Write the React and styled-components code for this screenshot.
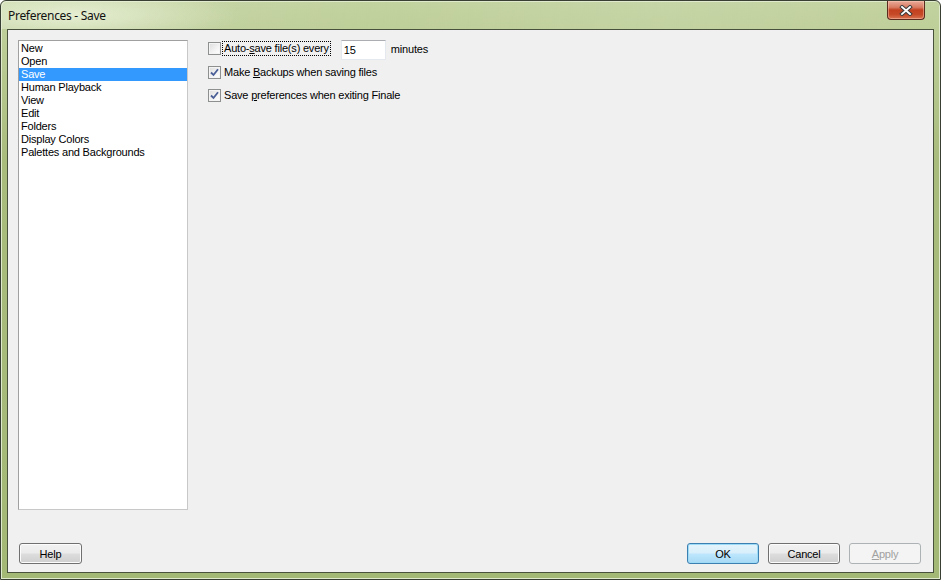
import React from 'react';
import styled, { createGlobalStyle } from 'styled-components';

const Global = createGlobalStyle`
  html, body { margin: 0; padding: 0; background: #ffffff; }
  body {
    font-family: "Liberation Sans", Arial, sans-serif;
    font-size: 11px;
    letter-spacing: -0.2px;
    color: #000;
  }
`;

const pages = [
  'New', 'Open', 'Save', 'Human Playback', 'View', 'Edit',
  'Folders', 'Display Colors', 'Palettes and Backgrounds',
];

const Window = styled.div`
  width: 941px;
  height: 580px;
  box-sizing: border-box;
  border: 1px solid #3a3f33;
  border-radius: 6px 6px 0 0;
  background: linear-gradient(180deg, #c3d3a0 0px, #a9bc7c 160px, #a4b876 100%);
  box-shadow: inset 1px 1px 0 #dfe9cb, inset -1px -1px 0 #dfe9cb;
  padding: 0 6px 6px 6px;
  display: flex;
  flex-direction: column;
`;

const TitleBar = styled.div`
  height: 28px;
  display: flex;
  align-items: flex-start;
  justify-content: space-between;
  margin: 0 -6px;
  padding: 0 7px 0 7px;
  background:
    radial-gradient(ellipse 170px 30px at 70px 14px, rgba(232, 240, 214, 0.9), rgba(232, 240, 214, 0) 100%),
    linear-gradient(100deg, rgba(255,255,255,0.12) 0%, rgba(255,255,255,0) 40%, rgba(255,255,255,0.08) 70%, rgba(255,255,255,0) 100%);
  border-radius: 6px 6px 0 0;
`;

const Title = styled.div`
  font-family: "Noto Sans", "Open Sans", sans-serif;
  font-size: 12px;
  letter-spacing: -0.3px;
  color: #111;
  padding-top: 6px;
`;

const CloseButton = styled.div`
  width: 38px;
  height: 19px;
  margin-right: 8px;
  box-sizing: border-box;
  border: 1px solid #5a2a1e;
  border-top: none;
  border-radius: 0 0 4px 4px;
  background: linear-gradient(180deg, #e9aa98 0%, #d97c63 35%, #c2401f 50%, #c64a28 75%, #da7352 100%);
  box-shadow: inset 0 0 0 1px rgba(255, 210, 190, 0.45);
  display: flex;
  align-items: center;
  justify-content: center;
`;

const Client = styled.div`
  flex: 1;
  box-sizing: border-box;
  border: 1px solid #47513b;
  background: #f0f0f0;
  display: flex;
  flex-direction: column;
  padding: 10px 12px 8px 10px;
`;

const Main = styled.div`
  display: flex;
  gap: 20px;
  flex: 1;
`;

const PageList = styled.ul`
  list-style: none;
  margin: 0;
  padding: 1px 0;
  width: 170px;
  height: 470px;
  box-sizing: border-box;
  background: #fff;
  border: 1px solid #c8c8c8;
  border-top-color: #a0a0a0;
  border-left-color: #a0a0a0;
`;

const PageItem = styled.li`
  height: 13px;
  line-height: 13px;
  padding-left: 2px;
  background: ${p => (p.$selected ? '#3399ff' : 'transparent')};
  color: ${p => (p.$selected ? '#fff' : '#000')};
  white-space: nowrap;
`;

const Options = styled.div`
  display: flex;
  flex-direction: column;
  padding-top: 2px;
`;

const Row = styled.div`
  display: flex;
  align-items: center;
  height: 13px;
  margin-bottom: ${p => p.$gap || 0}px;
`;

const Box = styled.span`
  width: 13px;
  height: 13px;
  flex: none;
  box-sizing: border-box;
  border: 1px solid #8e8f8f;
  background: linear-gradient(135deg, #dcdcdc 0%, #f4f4f4 60%, #ffffff 100%);
  box-shadow: inset 0 0 0 1px #f4f4f4;
  display: flex;
  align-items: center;
  justify-content: center;
  margin-right: 1px;
`;

const Label = styled.span`
  padding: 0 1px;
  line-height: 13px;
  border: 1px dotted ${p => (p.$focus ? '#000' : 'transparent')};
  white-space: nowrap;
`;

const Key = styled.span`
  text-decoration: underline;
`;

const NumberField = styled.div`
  width: 45px;
  height: 20px;
  flex: none;
  box-sizing: border-box;
  margin: 3px 0 0 10px;
  border: 1px solid #e3e9ef;
  border-top-color: #abadb3;
  background: #fff;
  padding: 2px 0 0 2px;
  line-height: 14px;
`;

const Unit = styled.span`
  margin-left: 5px;
`;

const Footer = styled.div`
  display: flex;
  align-items: center;
  gap: 9px;
  height: 21px;
`;

const Spacer = styled.div`
  flex: 1;
`;

const Button = styled.div`
  width: ${p => p.$w || 72}px;
  height: 21px;
  box-sizing: border-box;
  margin-left: ${p => p.$indent || 0}px;
  border-radius: 3px;
  display: flex;
  align-items: center;
  justify-content: center;
  border: 1px solid ${p => (p.$default ? '#3c7fb1' : p.$disabled ? '#adb2b5' : '#707070')};
  color: ${p => (p.$disabled ? '#a0a0a0' : '#000')};
  background: ${p =>
    p.$default
      ? 'linear-gradient(180deg, #e5f4fc 0%, #d8effb 48%, #bde6fd 52%, #a7d9f5 100%)'
      : p.$disabled
      ? '#f4f4f4'
      : 'linear-gradient(180deg, #f2f2f2 0%, #ebebeb 48%, #dddddd 52%, #cfcfcf 100%)'};
  box-shadow: inset 0 0 0 1px ${p => (p.$default ? '#9edbf7' : p.$disabled ? '#f4f4f4' : '#fcfcfc')};
`;

function Check({ checked }) {
  return (
    <Box>
      {checked && (
        <svg width="9" height="9" viewBox="0 0 9 9">
          <path d="M1 4.5 L3.5 7 L8 1.2" fill="none" stroke="#4a5f97" strokeWidth="1.8" />
        </svg>
      )}
    </Box>
  );
}

export default function App() {
  return (
    <>
      <Global />
      <Window>
        <TitleBar>
          <Title>Preferences - Save</Title>
          <CloseButton>
            <svg width="14" height="11" viewBox="0 0 14 11">
              <path d="M3 2 L11 9 M11 2 L3 9" stroke="#3b3b3b" strokeWidth="3.8" strokeLinecap="square" />
              <path d="M3 2 L11 9 M11 2 L3 9" stroke="#ffffff" strokeWidth="1.9" strokeLinecap="square" />
            </svg>
          </CloseButton>
        </TitleBar>
        <Client>
          <Main>
            <PageList>
              {pages.map(p => (
                <PageItem key={p} $selected={p === 'Save'}>{p}</PageItem>
              ))}
            </PageList>
            <Options>
              <Row $gap={11}>
                <Check />
                <Label $focus>Auto-<Key>s</Key>ave file(s) every</Label>
                <NumberField>15</NumberField>
                <Unit>minutes</Unit>
              </Row>
              <Row $gap={10}>
                <Check checked />
                <Label>Make <Key>B</Key>ackups when saving files</Label>
              </Row>
              <Row>
                <Check checked />
                <Label>Save <Key>p</Key>references when exiting Finale</Label>
              </Row>
            </Options>
          </Main>
          <Footer>
            <Button $w={63} $indent={1}>Help</Button>
            <Spacer />
            <Button $default>OK</Button>
            <Button>Cancel</Button>
            <Button $disabled><span><Key>A</Key>pply</span></Button>
          </Footer>
        </Client>
      </Window>
    </>
  );
}
